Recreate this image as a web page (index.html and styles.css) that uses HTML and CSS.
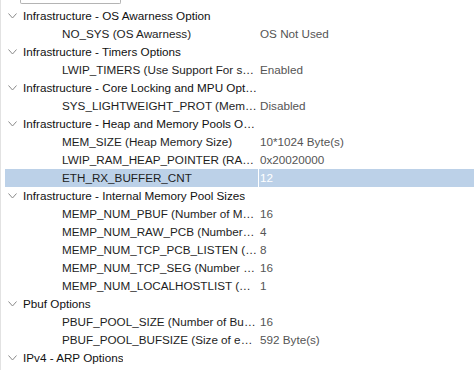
FILE: index.html
```html
<!DOCTYPE html>
<html lang="en">
<head>
  <meta charset="UTF-8">
  <title>LwIP Configuration</title>
  <link rel="stylesheet" href="styles.css">
</head>
<body>

<div class="panel">
  <div class="search"></div>

  <div class="tree">
    <div class="row group"><div class="name"><span class="chev"><svg width="9" height="6" viewBox="0 0 9 6"><polyline points="0.5,0.5 4.5,5 8.5,0.5" /></svg></span><span class="txt">Infrastructure - OS Awarness Option</span></div><div class="value"></div></div>
    <div class="row"><div class="name"><span class="txt">NO_SYS (OS Awarness)</span></div><div class="value">OS Not Used</div></div>

    <div class="row group"><div class="name"><span class="chev"><svg width="9" height="6" viewBox="0 0 9 6"><polyline points="0.5,0.5 4.5,5 8.5,0.5" /></svg></span><span class="txt">Infrastructure - Timers Options</span></div><div class="value"></div></div>
    <div class="row"><div class="name"><span class="txt">LWIP_TIMERS (Use Support For sys_timeout)</span></div><div class="value">Enabled</div></div>

    <div class="row group"><div class="name"><span class="chev"><svg width="9" height="6" viewBox="0 0 9 6"><polyline points="0.5,0.5 4.5,5 8.5,0.5" /></svg></span><span class="txt">Infrastructure - Core Locking and MPU Options</span></div><div class="value"></div></div>
    <div class="row"><div class="name"><span class="txt">SYS_LIGHTWEIGHT_PROT (Memory Protection)</span></div><div class="value">Disabled</div></div>

    <div class="row group"><div class="name"><span class="chev"><svg width="9" height="6" viewBox="0 0 9 6"><polyline points="0.5,0.5 4.5,5 8.5,0.5" /></svg></span><span class="txt">Infrastructure - Heap and Memory Pools Options</span></div><div class="value"></div></div>
    <div class="row"><div class="name"><span class="txt">MEM_SIZE (Heap Memory Size)</span></div><div class="value">10*1024 Byte(s)</div></div>
    <div class="row"><div class="name"><span class="txt">LWIP_RAM_HEAP_POINTER (RAM Heap Pointer)</span></div><div class="value">0x20020000</div></div>
    <div class="row selected"><div class="name"><span class="txt">ETH_RX_BUFFER_CNT</span></div><div class="value">12</div></div>

    <div class="row group"><div class="name"><span class="chev"><svg width="9" height="6" viewBox="0 0 9 6"><polyline points="0.5,0.5 4.5,5 8.5,0.5" /></svg></span><span class="txt">Infrastructure - Internal Memory Pool Sizes</span></div><div class="value"></div></div>
    <div class="row"><div class="name"><span class="txt">MEMP_NUM_PBUF (Number of Memory Pool)</span></div><div class="value">16</div></div>
    <div class="row"><div class="name"><span class="txt">MEMP_NUM_RAW_PCB (Number of RAW PCB)</span></div><div class="value">4</div></div>
    <div class="row"><div class="name"><span class="txt">MEMP_NUM_TCP_PCB_LISTEN (Number of listening TCP)</span></div><div class="value">8</div></div>
    <div class="row"><div class="name"><span class="txt">MEMP_NUM_TCP_SEG (Number of TCP segments)</span></div><div class="value">16</div></div>
    <div class="row"><div class="name"><span class="txt">MEMP_NUM_LOCALHOSTLIST (Number of host entries)</span></div><div class="value">1</div></div>

    <div class="row group"><div class="name"><span class="chev"><svg width="9" height="6" viewBox="0 0 9 6"><polyline points="0.5,0.5 4.5,5 8.5,0.5" /></svg></span><span class="txt">Pbuf Options</span></div><div class="value"></div></div>
    <div class="row"><div class="name"><span class="txt">PBUF_POOL_SIZE (Number of Buffers in the pool)</span></div><div class="value">16</div></div>
    <div class="row"><div class="name"><span class="txt">PBUF_POOL_BUFSIZE (Size of each pbuf)</span></div><div class="value">592 Byte(s)</div></div>

    <div class="row group"><div class="name"><span class="chev"><svg width="9" height="6" viewBox="0 0 9 6"><polyline points="0.5,0.5 4.5,5 8.5,0.5" /></svg></span><span class="txt">IPv4 - ARP Options</span></div><div class="value"></div></div>
  </div>
</div>

</body>
</html>
```

FILE: styles.css
```css
body { margin: 0; background-color: #ffffff; font-family: "Liberation Sans", Arial, sans-serif; font-size: 11.7px; overflow: hidden; }
.panel { height: 370px; border-left: 1px solid #e2e2e2; box-sizing: border-box; }
.search { margin-left: 19px; width: 99px; height: 3px; border: 1px solid #b4b4b4; border-top: none; border-radius: 0 0 2px 2px; }
.tree { margin-top: 3px; padding-left: 4px; }
.row { display: flex; height: 18px; line-height: 18px; }
.name { width: 253px; display: flex; align-items: center; padding-left: 57px; padding-right: 1px; box-sizing: border-box; color: #1e1e1e; }
.name .txt { overflow: hidden; white-space: nowrap; text-overflow: ellipsis; }
.group .name { padding-left: 3px; color: #111; }
.chev { width: 15px; flex: none; display: flex; align-items: center; }
.chev polyline { fill: none; stroke: #8a8a8a; stroke-width: 1; }
.value { flex: 1; padding-left: 2px; color: #555; white-space: nowrap; }
.selected { background-color: #bcd1e8; }
.selected .value { color: #ffffff; border-left: 1px solid #ffffff; padding-left: 1px; }
```
